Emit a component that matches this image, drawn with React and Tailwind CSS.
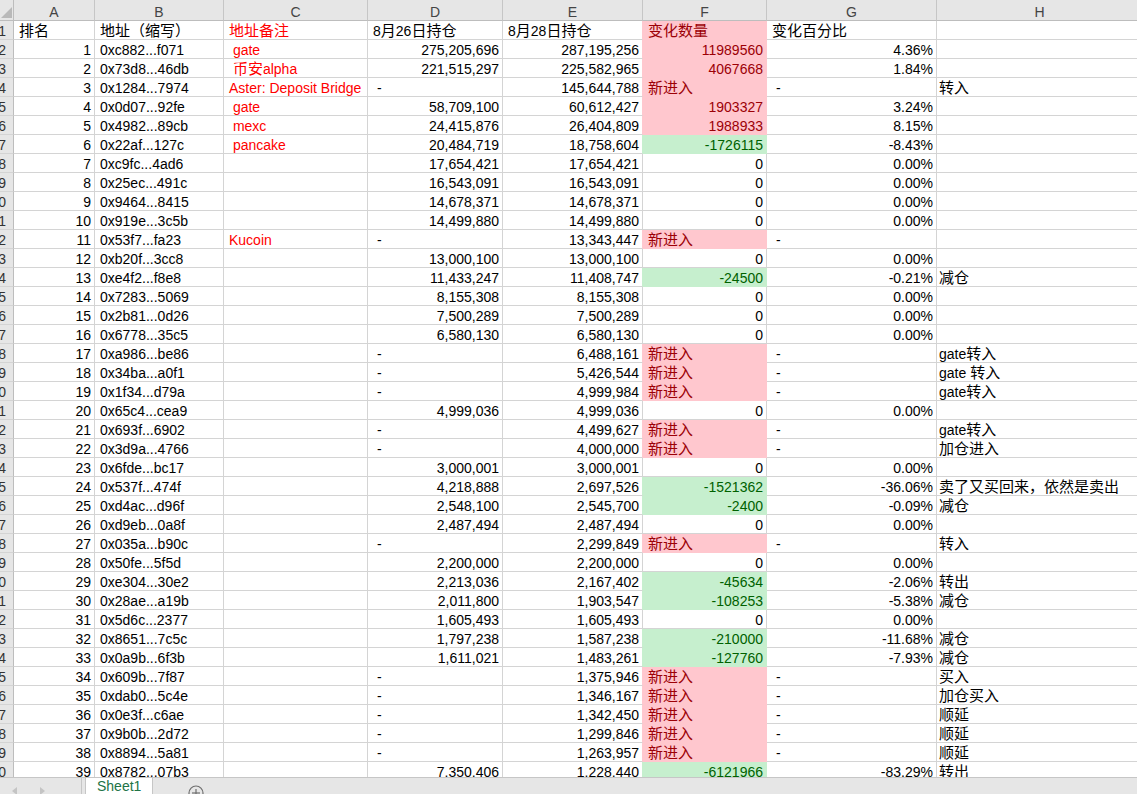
import React from "react";

const rows = [
  [1, "0xc882...f071", " gate", "275,205,696", "287,195,256", "11989560", "p", "4.36%", ""],
  [2, "0x73d8...46db", " 币安alpha", "221,515,297", "225,582,965", "4067668", "p", "1.84%", ""],
  [3, "0x1284...7974", "Aster: Deposit Bridge", " -", "145,644,788", "新进入", "n", " -", "转入"],
  [4, "0x0d07...92fe", " gate", "58,709,100", "60,612,427", "1903327", "p", "3.24%", ""],
  [5, "0x4982...89cb", " mexc", "24,415,876", "26,404,809", "1988933", "p", "8.15%", ""],
  [6, "0x22af...127c", " pancake", "20,484,719", "18,758,604", "-1726115", "g", "-8.43%", ""],
  [7, "0xc9fc...4ad6", "", "17,654,421", "17,654,421", "0", "z", "0.00%", ""],
  [8, "0x25ec...491c", "", "16,543,091", "16,543,091", "0", "z", "0.00%", ""],
  [9, "0x9464...8415", "", "14,678,371", "14,678,371", "0", "z", "0.00%", ""],
  [10, "0x919e...3c5b", "", "14,499,880", "14,499,880", "0", "z", "0.00%", ""],
  [11, "0x53f7...fa23", "Kucoin", " -", "13,343,447", "新进入", "n", " -", ""],
  [12, "0xb20f...3cc8", "", "13,000,100", "13,000,100", "0", "z", "0.00%", ""],
  [13, "0xe4f2...f8e8", "", "11,433,247", "11,408,747", "-24500", "g", "-0.21%", "减仓"],
  [14, "0x7283...5069", "", "8,155,308", "8,155,308", "0", "z", "0.00%", ""],
  [15, "0x2b81...0d26", "", "7,500,289", "7,500,289", "0", "z", "0.00%", ""],
  [16, "0x6778...35c5", "", "6,580,130", "6,580,130", "0", "z", "0.00%", ""],
  [17, "0xa986...be86", "", " -", "6,488,161", "新进入", "n", " -", "gate转入"],
  [18, "0x34ba...a0f1", "", " -", "5,426,544", "新进入", "n", " -", "gate 转入"],
  [19, "0x1f34...d79a", "", " -", "4,999,984", "新进入", "n", " -", "gate转入"],
  [20, "0x65c4...cea9", "", "4,999,036", "4,999,036", "0", "z", "0.00%", ""],
  [21, "0x693f...6902", "", " -", "4,499,627", "新进入", "n", " -", "gate转入"],
  [22, "0x3d9a...4766", "", " -", "4,000,000", "新进入", "n", " -", "加仓进入"],
  [23, "0x6fde...bc17", "", "3,000,001", "3,000,001", "0", "z", "0.00%", ""],
  [24, "0x537f...474f", "", "4,218,888", "2,697,526", "-1521362", "g", "-36.06%", "卖了又买回来，依然是卖出"],
  [25, "0xd4ac...d96f", "", "2,548,100", "2,545,700", "-2400", "g", "-0.09%", "减仓"],
  [26, "0xd9eb...0a8f", "", "2,487,494", "2,487,494", "0", "z", "0.00%", ""],
  [27, "0x035a...b90c", "", " -", "2,299,849", "新进入", "n", " -", "转入"],
  [28, "0x50fe...5f5d", "", "2,200,000", "2,200,000", "0", "z", "0.00%", ""],
  [29, "0xe304...30e2", "", "2,213,036", "2,167,402", "-45634", "g", "-2.06%", "转出"],
  [30, "0x28ae...a19b", "", "2,011,800", "1,903,547", "-108253", "g", "-5.38%", "减仓"],
  [31, "0x5d6c...2377", "", "1,605,493", "1,605,493", "0", "z", "0.00%", ""],
  [32, "0x8651...7c5c", "", "1,797,238", "1,587,238", "-210000", "g", "-11.68%", "减仓"],
  [33, "0x0a9b...6f3b", "", "1,611,021", "1,483,261", "-127760", "g", "-7.93%", "减仓"],
  [34, "0x609b...7f87", "", " -", "1,375,946", "新进入", "n", " -", "买入"],
  [35, "0xdab0...5c4e", "", " -", "1,346,167", "新进入", "n", " -", "加仓买入"],
  [36, "0x0e3f...c6ae", "", " -", "1,342,450", "新进入", "n", " -", "顺延"],
  [37, "0x9b0b...2d72", "", " -", "1,299,846", "新进入", "n", " -", "顺延"],
  [38, "0x8894...5a81", "", " -", "1,263,957", "新进入", "n", " -", "顺延"],
  [39, "0x8782...07b3", "", "7,350,406", "1,228,440", "-6121966", "g", "-83.29%", "转出"],
];

const CJK = /([\u2E80-\u9FFF\uFF00-\uFFEF\u3000-\u303F]+)/;

function T({ s }) {
  return s.split(CJK).map((p, i) =>
    i % 2 ? (
      <span key={i} className="text-[15px]">
        {p}
      </span>
    ) : (
      p
    )
  );
}

const FILL = {
  p: { bg: "bg-[#ffc7ce] text-[#9c0006]", r: "border-r-[#ffc7ce]", b: "border-b-[#ffc7ce]" },
  n: { bg: "bg-[#ffc7ce] text-[#9c0006]", r: "border-r-[#ffc7ce]", b: "border-b-[#ffc7ce]" },
  g: { bg: "bg-[#c6efce] text-[#006100]", r: "border-r-[#c6efce]", b: "border-b-[#c6efce]" },
};

function Cell({ children, right, tight, extra = "", r = "border-r-[#d4d4d4]", b = "border-b-[#d4d4d4]" }) {
  return (
    <div
      className={`h-[19px] border-r border-b ${r} ${b} pt-[3px] leading-[14px] whitespace-pre overflow-hidden ${
        right ? "text-right pr-[3px]" : tight ? "pl-[2px]" : "pl-[5px]"
      } ${extra}`}
    >
      {children}
    </div>
  );
}

function RowNum({ n }) {
  return (
    <div className="h-[19px] bg-[#e6e6e6] border-r border-b border-r-[#bdbdbd] border-b-[#d4d4d4] overflow-hidden flex justify-end pr-[7px] pt-[3px] leading-[14px] text-[#333] whitespace-nowrap">
      <span>{n}</span>
    </div>
  );
}

function ColHead({ label }) {
  return (
    <div className="h-[21px] bg-[#e6e6e6] border-r border-b border-r-[#c6c6c6] border-b-[#bdbdbd] text-center pt-[4px] leading-[16px] text-[#444]">
      {label}
    </div>
  );
}

export default function App() {
  return (
    <div className="w-[1137px] h-[794px] overflow-hidden bg-white flex flex-col font-['Liberation_Sans','Noto_Sans_CJK_SC',sans-serif] text-[14px] text-black">
      <div className="h-[777px] shrink-0 overflow-hidden">
        <div className="grid grid-cols-[14px_81px_129px_144px_135px_140px_124px_170px_206px] w-[1143px]">
          {/* corner */}
          <div className="h-[21px] bg-[#e6e6e6] border-r border-b border-r-[#bdbdbd] border-b-[#bdbdbd] relative">
            <svg className="absolute left-0 top-0" width="13" height="20" viewBox="0 0 13 20">
              <polygon points="12,7 12,18 1,18" fill="#b9b9b9" />
            </svg>
          </div>
          {["A", "B", "C", "D", "E", "F", "G", "H"].map((l) => (
            <ColHead key={l} label={l} />
          ))}

          {/* header row 1 */}
          <RowNum n={1} />
          <Cell><T s="排名" /></Cell>
          <Cell><T s="地址（缩写）" /></Cell>
          <Cell extra="text-[#ff0000]"><T s="地址备注" /></Cell>
          <Cell><T s="8月26日持仓" /></Cell>
          <Cell r="border-r-[#ffc7ce]"><T s="8月28日持仓" /></Cell>
          <Cell r={FILL.p.r} b={FILL.p.b} extra={FILL.p.bg}><T s="变化数量" /></Cell>
          <Cell><T s="变化百分比" /></Cell>
          <Cell tight />

          {rows.map((row, idx) => {
            const [rank, addr, note, d26, d28, chg, type, pct, remark] = row;
            const f = FILL[type];
            return (
              <React.Fragment key={rank}>
                <RowNum n={idx + 2} />
                <Cell right>{rank}</Cell>
                <Cell>{addr}</Cell>
                <Cell extra="text-[#ff0000]"><T s={note} /></Cell>
                <Cell right={d26 !== " -"}>{d26}</Cell>
                <Cell right r={f ? f.r : "border-r-[#d4d4d4]"}>{d28}</Cell>
                {f ? (
                  <Cell right={type !== "n"} r={f.r} b={f.b} extra={f.bg}>
                    <T s={chg} />
                  </Cell>
                ) : (
                  <Cell right>{chg}</Cell>
                )}
                <Cell right={pct !== " -"}>{pct}</Cell>
                <Cell tight><T s={remark} /></Cell>
              </React.Fragment>
            );
          })}
        </div>
      </div>

      {/* sheet tab bar */}
      <div className="h-[17px] shrink-0 bg-[#e6e6e6] border-t border-[#c6c6c6] flex overflow-hidden">
        <div className="w-[82px] shrink-0 border-r border-[#c6c6c6] relative">
          <svg className="absolute left-[12px] top-[9px]" width="6" height="8" viewBox="0 0 6 8">
            <polygon points="5,0 5,8 0,4" fill="#c4c4c4" />
          </svg>
          <svg className="absolute left-[40px] top-[9px]" width="6" height="8" viewBox="0 0 6 8">
            <polygon points="0,0 0,8 5,4" fill="#c4c4c4" />
          </svg>
        </div>
        <div className="ml-[3px] w-[68px] shrink-0 bg-white border-x border-[#c6c6c6] pl-[11px] pt-[2px] leading-[14px] text-[#217346] -mt-px">
          Sheet1
        </div>
        <div className="ml-[35px] pt-[7px]">
          <svg width="16" height="16" viewBox="0 0 16 16">
            <circle cx="8" cy="8" r="7" fill="none" stroke="#6e6e6e" strokeWidth="1.2" />
            <line x1="8" y1="4" x2="8" y2="12" stroke="#6e6e6e" strokeWidth="1.2" />
            <line x1="4" y1="8" x2="12" y2="8" stroke="#6e6e6e" strokeWidth="1.2" />
          </svg>
        </div>
      </div>
    </div>
  );
}
